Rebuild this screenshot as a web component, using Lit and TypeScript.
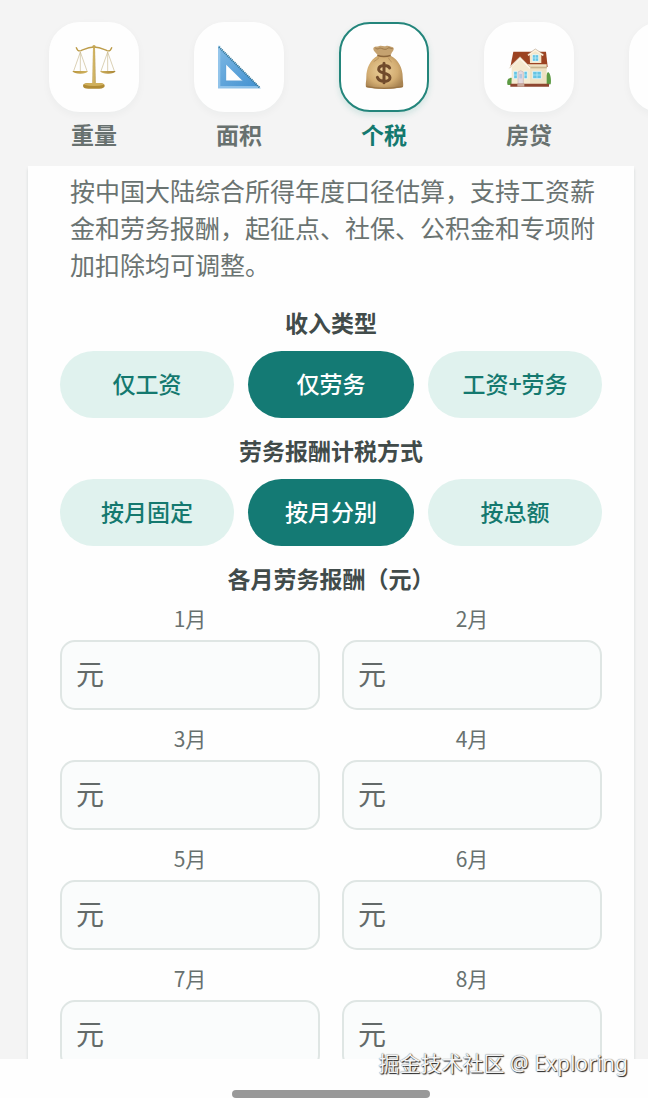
import { LitElement, html, css, svg, nothing } from "lit";
import { customElement, property, state } from "lit/decorators.js";
import { classMap } from "lit/directives/class-map.js";

const scales = svg`
  <defs>
    <linearGradient id="brass" x1="0" x2="1"><stop offset="0" stop-color="#b8943c"/><stop offset=".5" stop-color="#dcc274"/><stop offset="1" stop-color="#a98432"/></linearGradient>
  </defs>
  <g fill="none" stroke="#c9b98f" stroke-width="2">
    <path d="M151 123 131 180M151 123v57M151 123l20 57M233 123l-20 57M233 123v57M233 123l20 57"/>
  </g>
  <path d="M139 110q4 12 14 9c12-5 20-11 39-11s27 6 39 11q10 3 14-9" fill="none" stroke="#bd9d4b" stroke-width="4" stroke-linecap="round"/>
  <path d="M127 180h47q-4 8-23 8t-24-8zM210 180h47q-4 8-23 8t-24-8z" fill="url(#brass)"/>
  <path d="M189 106h6l2 113h-10z" fill="url(#brass)"/>
  <circle cx="192" cy="107" r="5" fill="#c4a655"/>
  <path d="M159 224q0-8 16-8h33q16 0 16 8t-16 9h-33q-16 0-16-9z" fill="#b08b35"/>
  <path d="M162 221q2-5 15-5h30q13 0 15 5-14 4-30 4t-30-4z" fill="#d0b05c"/>`;

const setSquare = svg`
  <defs>
    <linearGradient id="blue" x1="0" y1="0" x2="1" y2="1"><stop offset="0" stop-color="#7fb9e4"/><stop offset="1" stop-color="#3f8fd0"/></linearGradient>
  </defs>
  <path fill-rule="evenodd" d="M114 104 242 232H114zM137 160v50h51z" fill="url(#blue)"/>
  <path d="M114 104h7v121h114l7 7H114z" fill="#9ccbed" opacity=".8"/>
  <path d="M137 160v50h51" fill="none" stroke="#5a9fd6" stroke-width="3"/>
  <path d="M117 108 239 230" stroke="#2f7291" stroke-width="6" stroke-dasharray="3 3"/>`;

const moneyBag = svg`
  <defs>
    <radialGradient id="sack" cx=".45" cy=".45" r=".62"><stop offset="0" stop-color="#ecd09b"/><stop offset=".65" stop-color="#d3ad72"/><stop offset="1" stop-color="#a98452"/></radialGradient>
  </defs>
  <path d="M173 134C150 146 139 172 139 198c0 12-3 22-1 30 16 7 94 7 111 0 2-8-1-18-1-30 0-26-12-52-36-64z" fill="url(#sack)"/>
  <path d="M174 134c-5-8-15-14-14-22 3-7 12-4 18-7 8-2 14 3 20 0 9-2 12 3 19 3 8 3 3 11-1 16l-5 10q-18 6-37 0z" fill="#c5a270"/>
  <path d="M166 111c10 7 10-2 18 1s14 5 19 0 10 2 15 1" fill="none" stroke="#9b7748" stroke-width="3"/>
  <path d="M172 133q20 7 40 0" fill="none" stroke="#8a653a" stroke-width="4"/>
  <path d="M177 140q-8 8-16 12M205 140q4 9 10 13" fill="none" stroke="#b8935f" stroke-width="3"/>
  <path d="M209 171c-5-10-32-11-33 4-1 14 34 8 34 25 0 16-33 14-38-1M192 157v58" fill="none" stroke="#714b2c" stroke-width="9" stroke-linecap="round"/>
  <path d="M139 226q53 12 109 0" fill="none" stroke="#9b7545" stroke-width="4"/>`;

const house = svg`
  <path d="M114 222c-4-9 0-20 9-22 7 0 11 6 10 22zM229 221c-3-14-1-32 6-38 9 5 10 25 8 37z" fill="#5c9a43"/>
  <path d="M131 122h98l5 46H122z" fill="#9c4322"/>
  <path d="M129 160h102v60H126z" fill="#efe2c3"/>
  <path d="M177 167h55v5h-55z" fill="#c9b48d"/>
  <path d="M126 168 152 141l29 30v49h-55z" fill="#f5ead0"/>
  <path d="M121 170 151 141l31 31" fill="none" stroke="#fff6e6" stroke-width="6"/>
  <path d="M119 172 151 138l33 33" fill="none" stroke="#b9a58a" stroke-width="1.500"/>
  <path d="M180 130 197 118l18 12v26h-34z" fill="#f3e6c9"/>
  <path d="M175 133 197 117l24 16" fill="none" stroke="#fff3df" stroke-width="5"/>
  <path d="M174 130 197 114l25 16" fill="none" stroke="#a48d76" stroke-width="1.500"/>
  <path d="M188 131h19v20h-19zM189 181h26v22h-26zM132 181h11v22h-11zM163 181h10v22h-10z" fill="#65c5e4" stroke="#fff" stroke-width="2"/>
  <path d="M188 141h19M197 131v20M189 192h26M202 181v22M132 192h11M163 192h10" stroke="#c6edf6" stroke-width="2"/>
  <path d="M145 183q8-8 16 0v37h-16z" fill="#e4d9df" stroke="#c7b5b5" stroke-width="2"/>
  <path d="M149 189h8v13h-8z" fill="#b8c7df"/>
  <path d="M122 218h116v9H122z" fill="#8e4630"/>
  <path d="M143 218h21v9h-21z" fill="#c9a99b"/>`;

interface Tool {
  name: string;
  box: string;
  art: unknown;
}

const TOOLS: Tool[] = [
  { name: "重量", box: "126 102 132 132", art: scales },
  { name: "面积", box: "111 102 132 132", art: setSquare },
  { name: "个税", box: "126 102 132 132", art: moneyBag },
  { name: "房贷", box: "112 102 132 132", art: house },
  { name: "", box: "0 0 132 132", art: nothing },
];

@customElement("tool-tabs")
export class ToolTabs extends LitElement {
  @state() private current = "个税";

  static styles = css`
    :host { display: block; overflow: hidden; }
    .tabs { display: flex; gap: 55px; padding: 22px 0 16px 49px; }
    .tab {
      flex: none; width: 90px; padding: 0; border: 0; background: none;
      display: flex; flex-direction: column; align-items: center; gap: 6px;
      font: bold 23px/32px "Noto Sans CJK SC", sans-serif; color: #68716f; cursor: pointer;
    }
    .tile {
      box-sizing: border-box; width: 90px; height: 90px; border-radius: 31px;
      display: grid; place-items: center; background: #fefefe;
      border: 2px solid #fefefe; box-shadow: 0 3px 8px rgba(20, 60, 55, 0.04);
    }
    .icon { width: 44px; height: 44px; }
    .active { color: #14796f; }
    .active .tile { border-color: #23857b; box-shadow: 0 3px 6px rgba(20, 140, 125, 0.16); }
  `;

  render() {
    return html`<nav class="tabs">
      ${TOOLS.map(
        (t) => html`<button
          class=${classMap({ tab: true, active: t.name === this.current })}
          @click=${() => (this.current = t.name)}
        >
          <span class="tile"><svg class="icon" viewBox=${t.box} aria-hidden="true">${t.art}</svg></span>
          <span>${t.name}</span>
        </button>`
      )}
    </nav>`;
  }
}

@customElement("choice-group")
export class ChoiceGroup extends LitElement {
  @property() heading = "";
  @property({ attribute: false }) options: string[] = [];
  @property() value = "";

  static styles = css`
    :host { display: block; }
    .heading { margin: 0 0 14px; font-size: 23px; line-height: 30px; font-weight: bold; text-align: center; color: #414b4a; }
    .row { display: grid; grid-template-columns: 21fr 20fr 21fr; gap: 14px; }
    .pill {
      height: 67px; padding: 0 0 4px; border: 0; border-radius: 34px;
      font: 500 23px/30px "Noto Sans CJK SC", sans-serif;
      background: #e0f2ee; color: #14796f; cursor: pointer;
    }
    .on { background: #147a74; color: #fff; }
  `;

  render() {
    return html`<h2 class="heading">${this.heading}</h2>
      <div class="row">
        ${this.options.map(
          (o) => html`<button
            class=${classMap({ pill: true, on: o === this.value })}
            aria-pressed=${o === this.value}
            @click=${() => (this.value = o)}
          >${o}</button>`
        )}
      </div>`;
  }
}

@customElement("app-root")
export class AppRoot extends LitElement {
  static styles = css`
    :host {
      display: flex; flex-direction: column; height: 100vh; position: relative;
      background: #f4f4f4; font-family: "Noto Sans CJK SC", sans-serif; overflow: hidden;
    }
    .view { flex: 1; min-height: 0; overflow: hidden; padding: 0 14px 0 28px; }
    .card {
      padding: 6px 32px 32px; background: #fefefe;
      box-shadow: 0 3px 3px rgba(30, 60, 55, 0.14);
    }
    .intro { margin: 0 0 24px; padding: 0 0 0 10px; font-size: 25px; line-height: 37px; color: #6a7371; }
    .group { margin-bottom: 17px; }
    .heading { margin: 0 0 12px; font-size: 23px; line-height: 30px; font-weight: bold; text-align: center; color: #414b4a; }
    .months { display: grid; grid-template-columns: 1fr 1fr; gap: 15px 22px; }
    .field { display: flex; flex-direction: column; gap: 9px; }
    .month { font-size: 21px; line-height: 26px; text-align: center; color: #68716f; }
    .amount {
      box-sizing: border-box; width: 100%; height: 70px; padding: 0 14px 4px;
      border: 2px solid #dfe6e4; border-radius: 15px; background: #fafcfc; outline: 0;
      font: 28px/40px "Noto Sans CJK SC", sans-serif; color: #333;
    }
    .amount::placeholder { color: #636a69; opacity: 1; }
    .system { flex: none; height: 39px; display: flex; align-items: flex-end; justify-content: center; background: #fefefe; }
    .handle { width: 198px; height: 8px; margin-left: 14px; border-radius: 4px; background: #999; }
    .mark {
      position: absolute; right: 20px; bottom: 20px; line-height: 30px;
      font-size: 21px; font-family: "Noto Sans", "Noto Sans CJK SC", sans-serif;
      color: #f4f4f4; text-shadow: 1px 1px 1px #222, 0 0 1px #555; pointer-events: none;
    }
  `;

  render() {
    return html`
      <tool-tabs></tool-tabs>
      <main class="view">
        <section class="card">
          <p class="intro">按中国大陆综合所得年度口径估算，支持工资薪金和劳务报酬，起征点、社保、公积金和专项附加扣除均可调整。</p>
          <choice-group class="group" heading="收入类型" .options=${["仅工资", "仅劳务", "工资+劳务"]} value="仅劳务"></choice-group>
          <choice-group class="group" heading="劳务报酬计税方式" .options=${["按月固定", "按月分别", "按总额"]} value="按月分别"></choice-group>
          <h2 class="heading">各月劳务报酬（元）</h2>
          <div class="months">
            ${[1, 2, 3, 4, 5, 6, 7, 8].map(
              (m) => html`<label class="field">
                <span class="month">${m}月</span>
                <input class="amount" inputmode="decimal" placeholder="元" />
              </label>`
            )}
          </div>
        </section>
      </main>
      <footer class="system"><div class="handle"></div></footer>
      <div class="mark">掘金技术社区 @ Exploring</div>
    `;
  }
}
